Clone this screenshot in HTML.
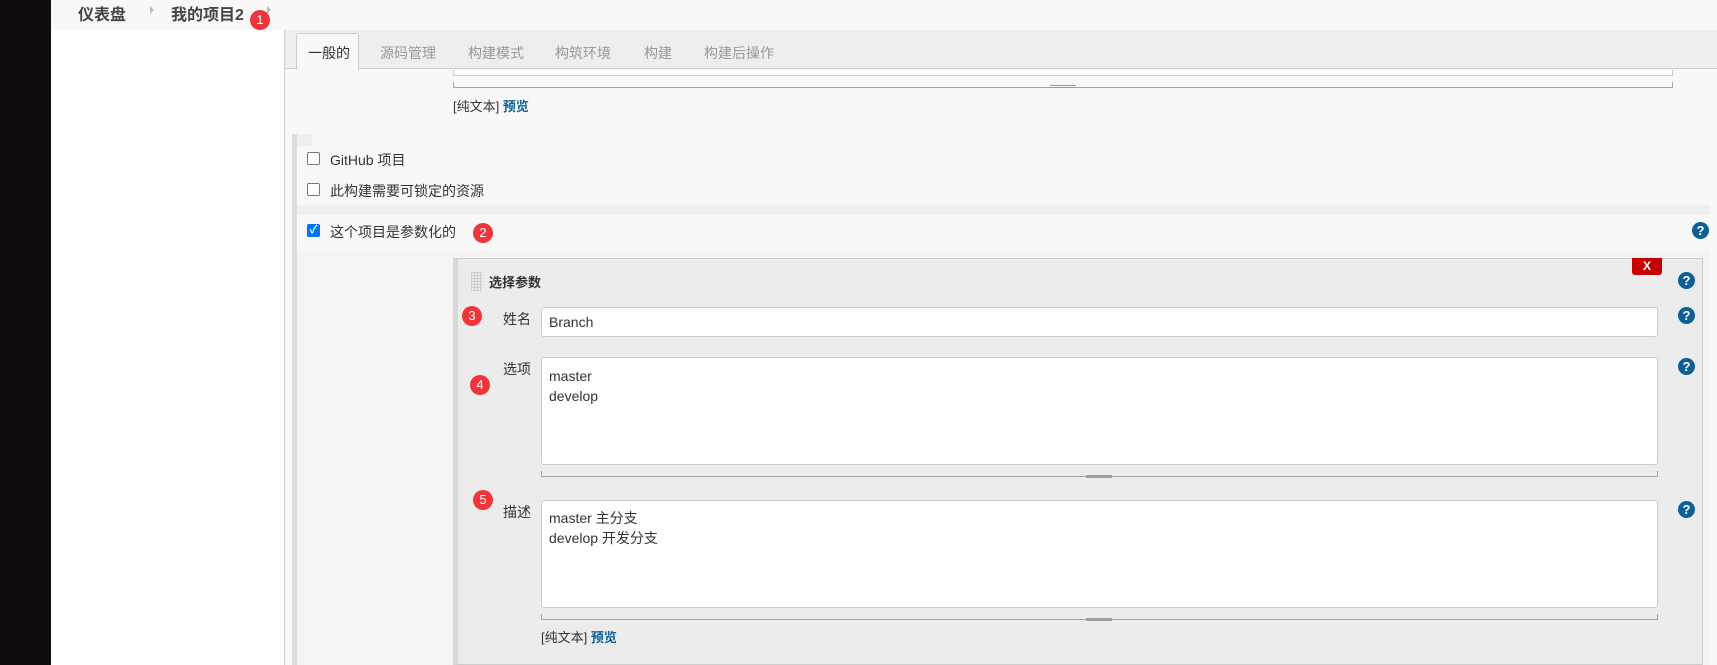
<!DOCTYPE html>
<html><head><meta charset="utf-8"><style>
*{box-sizing:border-box;margin:0;padding:0}
body{width:1717px;height:665px;overflow:hidden;background:#f8f8f8;font-family:"Liberation Sans","Noto Sans CJK SC",sans-serif;font-size:14px;color:#333;position:relative}
.a{position:absolute}
.badge{position:absolute;width:20px;height:20px;border-radius:50%;background:#f0343a;color:#fff;font-size:13px;text-align:center;line-height:20px}
.help{position:absolute;width:17px;height:17px;border-radius:50%;background:#0d5f96;color:#fff;font-weight:bold;font-size:13px;text-align:center;line-height:17px}
.tab{position:absolute;top:43px;color:#999;font-size:14px}
.cb{position:absolute;width:13px;height:13px;border:1px solid #767676;border-radius:2px;background:#fff}
.inp{position:absolute;background:#fff;border:1px solid #ccc;border-radius:3px;font-size:14px;padding-left:7px}
.line{position:absolute;height:6px;border-left:1px solid #9aa6b0;border-right:1px solid #9aa6b0;border-bottom:1px solid #9aa6b0}
.grip{position:absolute;width:26px;height:3px;border-top:1px solid #999;border-bottom:1px solid #999}
</style></head><body>
<div class="a" style="left:0;top:0;width:51px;height:665px;background:#120c0c"></div>
<div class="a" style="left:51px;top:0;width:1666px;height:30px;background:#f8f8f8"></div>
<div class="a" style="left:78px;top:1px;font-size:16px;font-weight:bold;color:#444">仪表盘</div>
<div class="a" style="left:150px;top:6px;width:0;height:0;border-left:4px solid #bbb;border-top:4px solid transparent;border-bottom:4px solid transparent"></div>
<div class="a" style="left:171px;top:1px;font-size:16px;font-weight:bold;color:#444">我的项目2</div>
<div class="a" style="left:267px;top:6px;width:0;height:0;border-left:4px solid #bbb;border-top:4px solid transparent;border-bottom:4px solid transparent"></div>
<div class="badge" style="left:250px;top:10px">1</div>
<div class="a" style="left:51px;top:30px;width:233px;height:635px;background:#fff"></div>
<div class="a" style="left:284px;top:30px;width:1px;height:635px;background:#ccc"></div>
<div class="a" style="left:285px;top:30px;width:1432px;height:39px;background:#eeeeee;border-bottom:1px solid #ccc"></div>
<div class="a" style="left:296px;top:33px;width:63px;height:37px;background:#f8f8f8;border:1px solid #ccc;border-bottom:none;border-radius:3px 3px 0 0"></div>
<div class="tab" style="left:308px;color:#333">一般的</div>
<div class="tab" style="left:380px">源码管理</div>
<div class="tab" style="left:468px">构建模式</div>
<div class="tab" style="left:555px">构筑环境</div>
<div class="tab" style="left:644px">构建</div>
<div class="tab" style="left:704px">构建后操作</div>
<div class="a" style="left:453px;top:70px;width:1220px;height:6px;background:#fff;border:1px solid #ccc;border-top:none"></div>
<div class="line" style="left:453px;top:82px;width:1220px"></div>
<div class="grip" style="left:1050px;top:85px"></div>
<div class="a" style="left:453px;top:96px;font-size:13px">[纯文本] <span style="color:#0d5f96;font-weight:bold">预览</span></div>
<div class="a" style="left:292px;top:134px;width:5px;height:531px;background:#ddd"></div>
<div class="a" style="left:297px;top:134px;width:15px;height:12px;background:#efefef"></div>
<div class="cb" style="left:307px;top:152px"></div>
<div class="a" style="left:330px;top:150px">GitHub 项目</div>
<div class="cb" style="left:307px;top:183px"></div>
<div class="a" style="left:330px;top:181px">此构建需要可锁定的资源</div>
<div class="a" style="left:297px;top:205px;width:1413px;height:10px;background:#efefef"></div>
<div class="a" style="left:307px;top:224px;width:13px;height:13px;background:#0075ff;border-radius:2px;color:#fff;font-size:11px;line-height:13px;text-align:center;font-weight:bold">✓</div>
<div class="a" style="left:330px;top:222px">这个项目是参数化的</div>
<div class="badge" style="left:473px;top:223px">2</div>
<div class="help" style="left:1692px;top:222px">?</div>
<div class="a" style="left:297px;top:250px;width:1413px;height:415px;background:#f4f4f4"></div>
<div class="a" style="left:453px;top:258px;width:1250px;height:407px;background:#ececec;border:1px solid #ccc;border-left:5px solid #d8d8d8"></div>
<div class="a" style="left:1632px;top:258px;width:30px;height:17px;background:#c40000;border-radius:0 0 3px 3px;color:#fff;font-weight:bold;font-size:12px;text-align:center;line-height:17px">X</div>
<div class="a" style="left:471px;top:272px;width:11px;height:19px;background:repeating-linear-gradient(90deg,#bbb 0 1px,transparent 1px 3px),repeating-linear-gradient(0deg,#bbb 0 1px,transparent 1px 3px);opacity:.6"></div>
<div class="a" style="left:489px;top:272px;font-size:13px;font-weight:bold">选择参数</div>
<div class="help" style="left:1678px;top:272px">?</div>
<div class="help" style="left:1678px;top:307px">?</div>
<div class="help" style="left:1678px;top:358px">?</div>
<div class="help" style="left:1678px;top:501px">?</div>
<div class="badge" style="left:462px;top:306px">3</div>
<div class="a" style="left:503px;top:309px">姓名</div>
<div class="inp" style="left:541px;top:307px;width:1117px;height:30px;line-height:28px">Branch</div>
<div class="badge" style="left:470px;top:375px">4</div>
<div class="a" style="left:503px;top:359px">选项</div>
<div class="inp" style="left:541px;top:357px;width:1117px;height:108px;padding-top:8px;line-height:20px">master<br>develop</div>
<div class="line" style="left:541px;top:471px;width:1117px"></div>
<div class="grip" style="left:1086px;top:475px"></div>
<div class="badge" style="left:473px;top:490px">5</div>
<div class="a" style="left:503px;top:502px">描述</div>
<div class="inp" style="left:541px;top:500px;width:1117px;height:108px;padding-top:7px;line-height:20px">master 主分支<br>develop 开发分支</div>
<div class="line" style="left:541px;top:614px;width:1117px"></div>
<div class="grip" style="left:1086px;top:618px"></div>
<div class="a" style="left:541px;top:627px;font-size:13px">[纯文本] <span style="color:#0d5f96;font-weight:bold">预览</span></div>
</body></html>
